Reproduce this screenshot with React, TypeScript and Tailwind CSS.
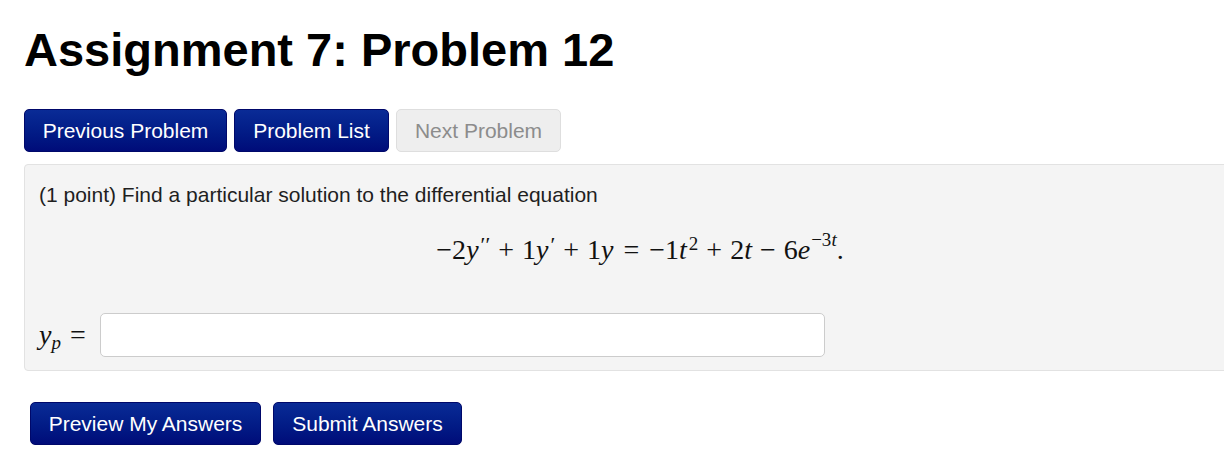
import React from 'react'

const navBtn =
  'h-[43px] px-0 whitespace-nowrap rounded-[5px] text-[21px] text-white bg-gradient-to-b from-[#0a2b96] to-[#000b79] border border-[#00086a] leading-none'

function Op({ children }: { children: React.ReactNode }) {
  return <span className="mx-[8px] not-italic">{children}</span>
}

function I({ children }: { children: React.ReactNode }) {
  return <span className="italic">{children}</span>
}

function Prime({ children }: { children: React.ReactNode }) {
  return <span className="relative -top-[7px] text-[22px] ml-[2px]">{children}</span>
}

function Equation() {
  return (
    <div
      className="text-[28px] text-[#111] leading-none whitespace-nowrap"
      style={{ fontFamily: '"Liberation Serif", "DejaVu Serif", serif' }}
    >
      <span>−2</span>
      <I>y</I>
      <Prime>′′</Prime>
      <Op>+</Op>
      <span>1</span>
      <I>y</I>
      <Prime>′</Prime>
      <Op>+</Op>
      <span>1</span>
      <I>y</I>
      <span className="mx-[10px]">=</span>
      <span>−1</span>
      <I>t</I>
      <sup className="text-[19px] ml-[2px]">2</sup>
      <Op>+</Op>
      <span>2</span>
      <I>t</I>
      <Op>−</Op>
      <span>6</span>
      <I>e</I>
      <sup className="text-[19px] ml-[1px] -top-[0.7em]">
        −3<span className="italic">t</span>
      </sup>
      <span>.</span>
    </div>
  )
}

export default function App() {
  return (
    <div
      className="w-[1224px] h-[449px] overflow-hidden bg-white text-[#1a1a1a]"
      style={{ fontFamily: '"Liberation Sans", Arial, sans-serif' }}
    >
      <div className="pl-[24px]">
        <h1 className="pt-[22px] text-[47px] font-bold text-black leading-[56px]">
          Assignment 7: Problem 12
        </h1>

        <div className="flex gap-[7px] mt-[31px]">
          <button className={`${navBtn} w-[203px]`}>Previous Problem</button>
          <button className={`${navBtn} w-[155px]`}>Problem List</button>
          <button className="h-[43px] w-[165px] whitespace-nowrap rounded-[5px] text-[21px] leading-none bg-[#eeeeee] border border-[#dedede] text-[#8c8c8c]">
            Next Problem
          </button>
        </div>

        <div className="mt-[12px] w-[1232px] h-[207px] bg-[#f4f4f4] border border-[#e2e2e2] rounded-[4px] pl-[14px] pr-[14px] pt-[17px]">
          <p className="text-[21px] leading-[26px] text-[#1f1f1f]">
            (1 point) Find a particular solution to the differential equation
          </p>
          <div className="flex justify-center mt-[28px]">
            <Equation />
          </div>
          <div className="flex items-center mt-[49px]">
            <span
              className="text-[28px] text-[#111] mr-[14px] whitespace-nowrap"
              style={{ fontFamily: '"Liberation Serif", "DejaVu Serif", serif' }}
            >
              <span className="italic">y</span>
              <sub className="italic text-[19px]">p</sub>
              <span className="ml-[9px]">=</span>
            </span>
            <div className="w-[725px] h-[44px] bg-white border border-[#cccccc] rounded-[5px]" />
          </div>
        </div>

        <div className="flex gap-[12px] mt-[31px] pl-[6px]">
          <button className={`${navBtn} w-[231px]`}>Preview My Answers</button>
          <button className={`${navBtn} w-[189px]`}>Submit Answers</button>
        </div>
      </div>
    </div>
  )
}
